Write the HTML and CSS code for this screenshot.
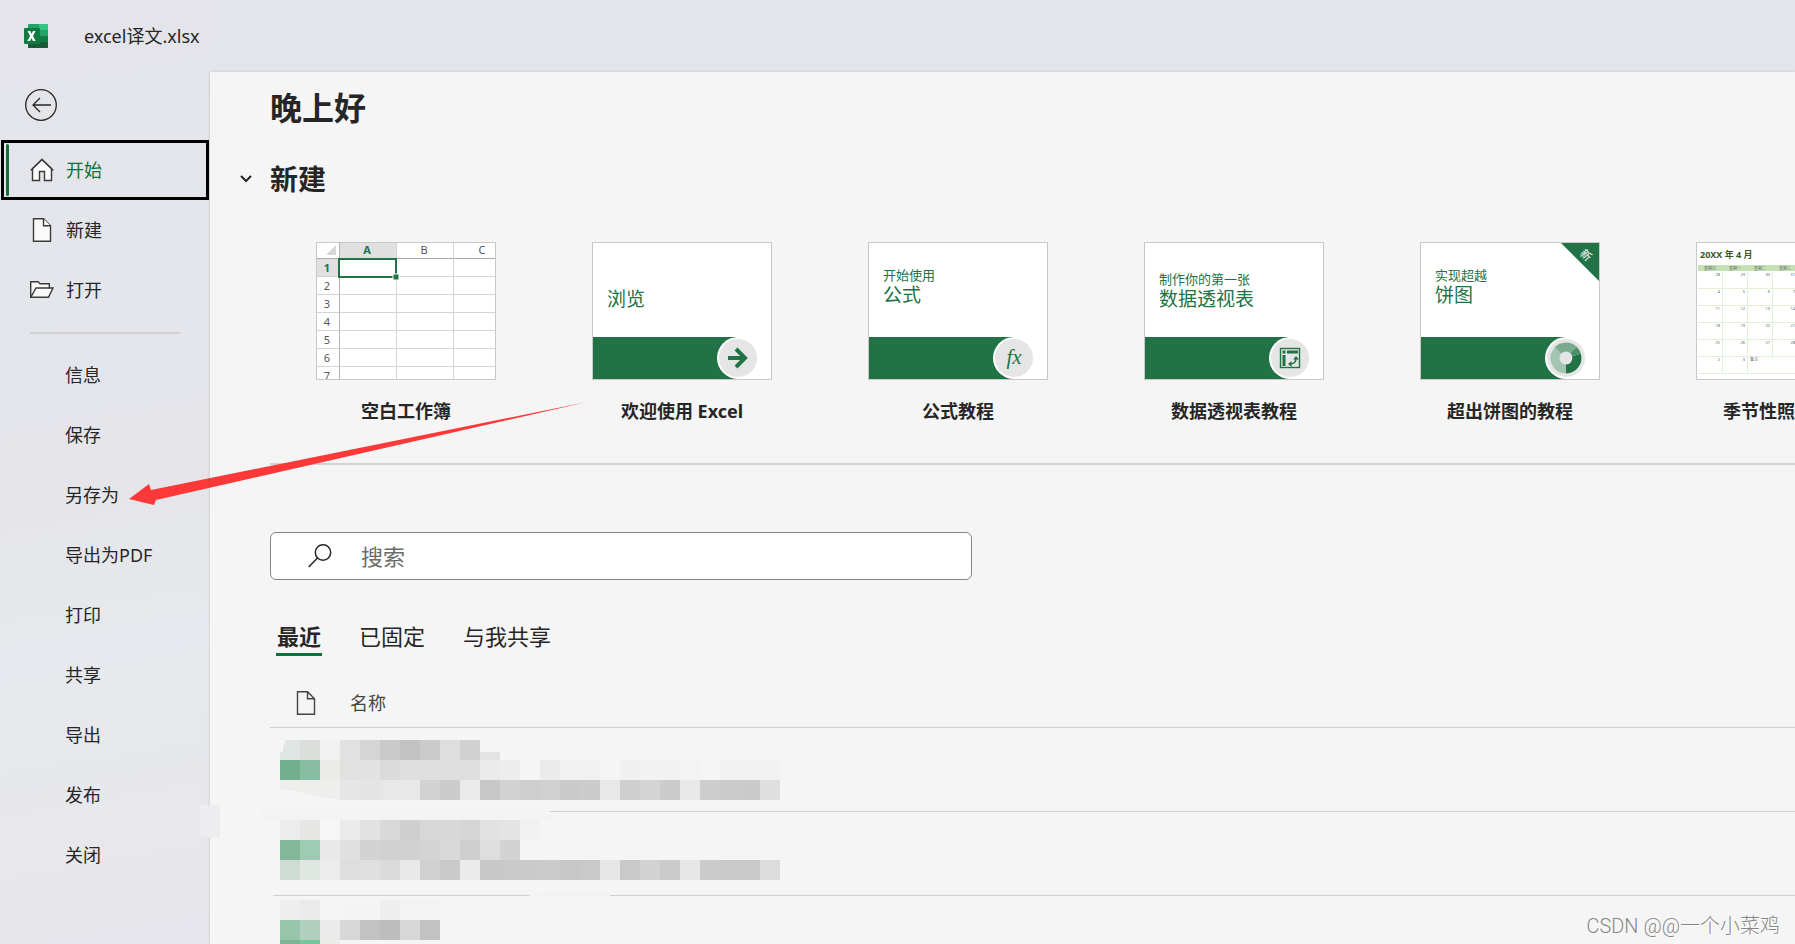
FILE: index.html
```html
<!DOCTYPE html>
<html lang="zh-CN">
  <head>
    <meta charset="UTF-8" />
    <meta name="viewport" content="width=device-width, initial-scale=1.0" />
    <title>excel译文.xlsx</title>
    <link rel="stylesheet" href="styles.css">
  </head>

  <body>
    <header class="titlebar">
      <svg class="logo" width="24" height="24" viewBox="0 0 24 24">
        <rect x="4" y="0" width="20" height="24" rx="1" fill="#21a366" />
        <rect x="15" y="0" width="9" height="6" fill="#33c481" />
        <rect x="4" y="12" width="11" height="6" fill="#185c37" />
        <rect x="15" y="12" width="9" height="6" fill="#107c41" />
        <rect x="4" y="18" width="20" height="6" rx="1" fill="#185c37" />
        <rect x="0" y="4" width="16" height="16" rx="1" fill="#107c41" />
        <path d="M3.500 7H6.300L7.600 9.900L9 7H11.500L9 12L11.600 17H8.900L7.500 14L6 17H3.300L6.100 12Z" fill="#fff" />
      </svg>
      <span class="filename">excel译文.xlsx</span>
    </header>

    <div class="container">
      <nav class="sidebar">
        <button class="back" aria-label="返回">
          <svg width="32" height="32" viewBox="0 0 32 32" fill="none" stroke="#262626" stroke-width="1.300">
            <circle cx="16" cy="16" r="15.300" />
            <path d="M26 16H8M15 9L8 16L15 23" />
          </svg>
        </button>
        <ul class="menu">
          <li>
            <a class="active" href="#home">
              <svg width="24" height="24" viewBox="0 0 24 24" fill="#fafafa" stroke="#3b3a39" stroke-width="1.400">
                <path d="M2.500 10.500V22.500H9.500V13.500H14.500V22.500H21.500V10.500L12 1.500Z" />
                <path d="M.7 12.500L12 1.500L23.300 12.500" fill="none" />
              </svg>
              开始
            </a>
          </li>
          <li>
            <a href="#new">
              <svg width="24" height="24" viewBox="0 0 24 24" fill="#fafafa" stroke="#3b3a39" stroke-width="1.400">
                <path d="M3.500 .7H13.500L20.500 7.700V23.300H3.500Z" />
                <path d="M13.500 .7V7.700H20.500" />
              </svg>
              新建
            </a>
          </li>
          <li>
            <a href="#open">
              <svg width="24" height="24" viewBox="0 0 24 24" fill="#fafafa" stroke="#3b3a39" stroke-width="1.400">
                <path d="M.7 19.300V3.700H8L10 5.700H19.300V10H23L18.500 19.300Z" />
                <path d="M.7 19.300L6 10H19.300" fill="none" />
              </svg>
              打开
            </a>
          </li>
        </ul>
        <hr class="split" />
        <ul class="menu">
          <li><a href="#info">信息</a></li>
          <li><a href="#save">保存</a></li>
          <li><a href="#saveas">另存为</a></li>
          <li><a href="#pdf">导出为PDF</a></li>
          <li><a href="#print">打印</a></li>
          <li><a href="#share">共享</a></li>
          <li><a href="#export">导出</a></li>
          <li><a href="#publish">发布</a></li>
          <li><a href="#close">关闭</a></li>
        </ul>
      </nav>

      <main class="main">
        <h1>晚上好</h1>
        <div class="section-title">
          <button class="toggle" aria-label="折叠">
            <svg width="12" height="8" viewBox="0 0 12 8" fill="none" stroke="#262626" stroke-width="2">
              <path d="M1 1L6 6L11 1" />
            </svg>
          </button>
          <h2>新建</h2>
        </div>

        <ul class="templates">
          <li>
            <div class="thumb">
              <svg id="sheet" width="178" height="136" viewBox="0 0 178 136"></svg>
            </div>
            <p>空白工作簿</p>
          </li>
          <li>
            <div class="thumb">
              <div class="words tall"><b>浏览</b></div>
              <div class="band"></div>
              <svg class="badge" width="42" height="42" viewBox="0 0 42 42">
                <circle cx="21" cy="21" r="21" fill="#fff" />
                <circle cx="21" cy="21" r="19" fill="#e5e5e5" />
                <path d="M11 21H29M19 12L28 21L19 30" fill="none" stroke="#217346" stroke-width="4" />
              </svg>
            </div>
            <p>欢迎使用 Excel</p>
          </li>
          <li>
            <div class="thumb">
              <div class="words"><small>开始使用</small><b>公式</b></div>
              <div class="band"></div>
              <svg class="badge" width="42" height="42" viewBox="0 0 42 42">
                <circle cx="21" cy="21" r="21" fill="#fff" />
                <circle cx="21" cy="21" r="19" fill="#e5e5e5" />
                <text class="fx" x="21" y="27" text-anchor="middle">fx</text>
              </svg>
            </div>
            <p>公式教程</p>
          </li>
          <li>
            <div class="thumb">
              <div class="words low"><small>制作你的第一张</small><b>数据透视表</b></div>
              <div class="band"></div>
              <svg class="badge" width="42" height="42" viewBox="0 0 42 42">
                <circle cx="21" cy="21" r="21" fill="#fff" />
                <circle cx="21" cy="21" r="19" fill="#e5e5e5" />
                <rect x="11.500" y="11.500" width="19" height="19" fill="none" stroke="#217346" stroke-width="1.400" />
                <path d="M13.500 13.500h3v3h-3zM18 13.500h11v3h-11zM13.500 18h3v11h-3z" fill="#217346" />
                <path d="M21 27C25 27 27 25 27 21" fill="none" stroke="#217346" stroke-width="1.500" />
                <path d="M24 22.500L27 19L30 22.500ZM22.500 24V30L19 27Z" fill="#217346" />
              </svg>
            </div>
            <p>数据透视表教程</p>
          </li>
          <li>
            <div class="thumb">
              <div class="words"><small>实现超越</small><b>饼图</b></div>
              <div class="band"></div>
              <svg class="badge" width="42" height="42" viewBox="0 0 42 42">
                <circle cx="21" cy="21" r="21" fill="#fff" />
                <circle cx="21" cy="21" r="19" fill="#e5e5e5" />
                <g fill="none" stroke-width="9">
                  <path d="M21 32A11 11 0 0 1 13 13.500" stroke="#a3c6b3" />
                  <path d="M13 13.500A11 11 0 0 1 28.500 13" stroke="#7aab90" />
                  <path d="M28.500 13A11 11 0 0 1 31.500 18" stroke="#4d8f6b" />
                  <path d="M31.500 18A11 11 0 0 1 21 32" stroke="#217346" />
                </g>
              </svg>
              <svg class="corner" width="38" height="38" viewBox="0 0 38 38">
                <path d="M0 0H38V38Z" fill="#217346" />
                <text x="25" y="16" text-anchor="middle" transform="rotate(45 25 12)">新</text>
              </svg>
            </div>
            <p>超出饼图的教程</p>
          </li>
          <li>
            <div class="thumb">
              <svg id="calendar" width="178" height="136" viewBox="0 0 178 136"></svg>
            </div>
            <p>季节性照片日历</p>
          </li>
        </ul>

        <hr class="line" />

        <label class="search">
          <svg width="24" height="24" viewBox="0 0 24 24" fill="none" stroke="#262626" stroke-width="1.500">
            <circle cx="15" cy="8.500" r="7.700" />
            <path d="M9.500 14L.7 23" />
          </svg>
          <input type="text" placeholder="搜索" aria-label="搜索" />
        </label>

        <div class="tabs">
          <button class="active">最近</button>
          <button>已固定</button>
          <button>与我共享</button>
        </div>

        <div class="recent">
          <table>
            <thead>
              <tr>
                <th class="type">
                  <svg width="24" height="24" viewBox="0 0 24 24" fill="none" stroke="#444" stroke-width="1.400">
                    <path d="M3.500 .7H13.500L20.500 7.700V23.300H3.500Z" />
                    <path d="M13.500 .7V7.700H20.500" />
                  </svg>
                </th>
                <th>名称</th>
              </tr>
            </thead>
            <tbody>
              <tr><td></td><td></td></tr>
              <tr><td></td><td></td></tr>
              <tr><td></td><td></td></tr>
            </tbody>
          </table>
          <svg id="mosaic" class="mosaic" width="520" height="220" viewBox="0 0 520 220" shape-rendering="crispEdges"></svg>
        </div>
      </main>
    </div>

    <svg class="smudge" width="20" height="34" viewBox="0 0 20 34">
      <path d="M0 0H20V34L0 31Z" fill="#ededf0" />
    </svg>
    <svg class="arrow" width="460" height="104" viewBox="0 0 460 104">
      <path d="M0 97L20 82L22 88L458 0L27 98L25 103Z" fill="#fc3938" />
    </svg>
    <div class="watermark">CSDN @@一个小菜鸡</div>

    <script src="script.js"></script>
  </body>
</html>
```

FILE: styles.css
```css
* {
  padding: 0;
  margin: 0;
  box-sizing: border-box;
}

html,
body {
  height: 100%;
  overflow: hidden;
}

body {
  position: relative;
  display: flex;
  flex-direction: column;
  font: 18px/24px "Noto Sans", "Noto Sans CJK SC", sans-serif;
  color: #262626;
  background: linear-gradient(170deg, #e4e4ea 0%, #e3e6eb 30%, #e5e5ea 50%, #e6e9ed 68%, #e8e6ec 100%) no-repeat 0 0 / 210px 100%, #e4e5ea;
}

ul {
  list-style: none;
}

a {
  color: inherit;
  text-decoration: none;
}

button {
  border: none;
  background: none;
  font: inherit;
  color: inherit;
  cursor: pointer;
}

svg {
  display: block;
}

/* 标题栏 */
.titlebar {
  flex: none;
  display: flex;
  align-items: center;
  gap: 36px;
  height: 72px;
  padding-left: 24px;
}

.container {
  flex: 1;
  display: flex;
  min-height: 0;
}

/* 左侧菜单 */
.sidebar {
  flex: none;
  width: 210px;
  padding-top: 17px;
}

.back {
  display: block;
  margin: 0 0 19px 25px;
}

.menu a {
  display: flex;
  align-items: center;
  gap: 12px;
  height: 60px;
  margin: 0 1px;
  padding-left: 64px;
}

.menu a:has(svg) {
  padding-left: 29px;
}

.menu a.active {
  position: relative;
  padding-left: 26px;
  border: 3px solid #000;
  color: #0f703b;
}

.menu a.active::before {
  content: "";
  position: absolute;
  left: 2px;
  top: 1px;
  bottom: 1px;
  width: 3px;
  border-radius: 2px;
  background-color: #0f703b;
}

.split {
  height: 2px;
  margin: 12px 30px 11px;
  border: none;
  background-color: #d0d0d2;
}

/* 右侧内容 */
.main {
  flex: 1;
  min-width: 0;
  padding: 14px 0 0 60px;
  overflow: hidden;
  background-color: #f5f5f5;
  box-shadow: 0 0 3px rgba(0, 0, 0, 0.15);
}

h1 {
  font-size: 32px;
  line-height: 44px;
}

.section-title {
  display: flex;
  align-items: center;
  gap: 18px;
  margin: 29px 0 43px -30px;
}

h2 {
  font-size: 28px;
  line-height: 40px;
}

.templates {
  display: flex;
  margin-left: -2px;
}

.templates li {
  flex: 0 0 276px;
}

.templates p {
  margin-top: 19px;
  font-weight: bold;
  text-align: center;
}

.thumb {
  position: relative;
  width: 180px;
  height: 138px;
  margin: 0 auto;
  border: 1px solid #c8c8c8;
  background-color: #fff;
  overflow: hidden;
}

.words {
  height: 94px;
  padding: 23px 0 0 14px;
  color: #217346;
}

.words.low {
  padding-top: 27px;
}

.words.tall {
  padding-top: 46px;
}

.words small,
.words b {
  display: block;
  font-size: 13px;
  line-height: 19px;
}

.words b {
  font-size: 19px;
  line-height: 20px;
  font-weight: normal;
}

.band {
  width: 144px;
  height: 42px;
  background-color: #217346;
}

.badge {
  position: absolute;
  left: 124px;
  bottom: 0;
}

.corner {
  position: absolute;
  top: 0;
  right: 0;
}

.corner text {
  font-size: 11px;
  fill: #fff;
}

.fx {
  font: italic 21px "Liberation Serif", serif;
  fill: #217346;
}

.line {
  height: 2px;
  margin: 40px 0 67px;
  border: none;
  background-color: #d2d2d2;
}

.search {
  display: flex;
  align-items: center;
  gap: 29px;
  max-width: 702px;
  height: 48px;
  padding-left: 37px;
  border: 1px solid #868686;
  border-radius: 6px;
  background-color: #fff;
}

.search input {
  flex: 1;
  border: none;
  outline: none;
  background: none;
  font: inherit;
  font-size: 22px;
}

.search input::placeholder {
  color: #6b6b6b;
}

.tabs {
  display: flex;
  gap: 36px;
  margin: 40px 6px 23px;
}

.tabs button {
  padding: 0 1px;
  border-bottom: 3px solid transparent;
  font-size: 22px;
  line-height: 33px;
}

.tabs .active {
  font-weight: bold;
  border-color: #0f703b;
}

.recent {
  position: relative;
}

.recent table {
  width: 100%;
  border-collapse: separate;
  border-spacing: 0;
}

.recent th {
  height: 49px;
  border-bottom: 1px solid #cfcfcf;
  font-weight: normal;
  text-align: left;
  color: #444;
}

.recent .type {
  width: 80px;
  padding-left: 24px;
}

.recent td {
  height: 84px;
  border-bottom: 1px solid #cfcfcf;
}

/* 打码 */
.mosaic {
  position: absolute;
  top: 49px;
  left: -10px;
}

.smudge {
  position: absolute;
  left: 200px;
  top: 805px;
}

.arrow {
  position: absolute;
  left: 129px;
  top: 402px;
}

.watermark {
  position: absolute;
  right: 15px;
  bottom: 5px;
  font: 20px/26px Roboto, "Noto Sans CJK SC", sans-serif;
  font-weight: 300;
  color: #858585;
  text-shadow: 1px 1px 0 #fff;
}

/* 缩略图文字 */
.head {
  font-size: 11px;
  fill: #555;
}

.head.on {
  font-weight: bold;
  fill: #217346;
}

.month {
  font-size: 9px;
  font-weight: bold;
  fill: #375623;
}

.day {
  font-size: 4px;
  fill: #666;
}
```

FILE: script.js
```js
// 空白工作簿
var s = '<rect x="23" width="57" height="16" fill="#e0e0e0"/><rect y="16" width="22" height="18" fill="#e0e0e0"/>';
s += '<path d="M19 2V12H9Z" fill="#d8d8d8"/>';
for (let i = 0; i < 7; i++) {
  s += `<rect y="${15 + i * 18}" width="178" height="1" fill="${i ? "#d4d4d4" : "#ababab"}"/>`;
  s += `<text class="head${i ? "" : " on"}" x="10" y="${29 + i * 18}" text-anchor="middle">${i + 1}</text>`;
}
s += '<path d="M22.500 0V136" stroke="#b5b5b5"/><path d="M79.500 0V136M136.500 0V136" stroke="#d4d4d4"/>';
s += '<text class="head on" x="50" y="11" text-anchor="middle">A</text>';
s += '<text class="head" x="107" y="11" text-anchor="middle">B</text>';
s += '<text class="head" x="165" y="11" text-anchor="middle">C</text>';
s += '<rect x="22" y="16" width="57" height="18" fill="#fff" stroke="#217346" stroke-width="2"/>';
s += '<rect x="76" y="31" width="6" height="6" fill="#217346" stroke="#fff"/>';
document.querySelector("#sheet").innerHTML = s;

// 日历
const weeks = ["星期日", "星期一", "星期二", "星期三", "星期四", "星期五", "星期六"];
const days = [
  [28, 29, 30, 31, 1, 2, 3],
  [4, 5, 6, 7, 8, 9, 10],
  [11, 12, 13, 14, 15, 16, 17],
  [18, 19, 20, 21, 22, 23, 24],
  [25, 26, 27, 28, 29, 30, 1],
  [2, 3],
];
var c = '<text class="month" x="3" y="15">20XX 年 4 月</text><rect x="1" y="22" width="175" height="6" fill="#c5e0b3"/>';
weeks.forEach(function (w, i) {
  c += `<text class="day" x="${13 + i * 25}" y="27" text-anchor="middle">${w}</text>`;
});
days.forEach(function (row, j) {
  c += `<rect x="1" y="${45 + j * 17}" width="175" height="1" fill="#e2efd9"/>`;
  row.forEach(function (d, i) {
    c += `<text class="day" x="${23 + i * 25}" y="${33 + j * 17}" text-anchor="end">${d}</text>`;
    c += `<rect x="${25 + i * 25}" y="${28 + j * 17}" width="1" height="17" fill="#e2efd9"/>`;
  });
});
c += '<text class="day" x="53" y="118">备注</text>';
document.querySelector("#calendar").innerHTML = c;

// 马赛克，每格 20px，- 为不绘制
const blocks = [
  [12, "dfe5e2 dcdedb f1f1f1 e1e1e1 d5d5d5 cacaca c2c2c2 cbcbcb dedede d1d1d1"],
  [32, "72af8e 87bda2 ebebe8 e1e1e1 e2e2e2 dbdbdb dedede dfdfdf dfdfdf dedede ebebeb ededed - ebebeb f1f1f1 f1f1f1 - f0f0f0 f2f2f2 f2f2f2 f3f3f3 - f2f2f2 f2f2f2 f2f2f2"],
  [52, "- - - e6e6e6 e4e4e4 e8e8e8 e8e8e8 d2d2d2 cccccc ebebeb c8c8c8 d3d3d3 cecece d0d0d0 cacaca cccccc e8e8e8 cfcfcf d4d4d4 cccccc e8e8e8 cdcdcd cbcbcb cacaca dfdfdf"],
  [92, "ececec e6e6e4 f6f6f6 ebebeb e2e2e2 d9d9d9 cfcfcf d7d7d7 d8d8d8 d5d5d5 e2e2e2 e4e4e4 f1f1f1"],
  [112, "82b89a 9dcbb3 e9e9e9 e0e0e0 d3d3d3 d1d1d1 d1d1d1 d4d4d4 d9d9d9 cfcfcf dedede d3d3d3"],
  [132, "cedcd3 e0e7e2 ececec dedede e0e0e0 dbdbdb e8e8e8 d0d0d0 c9c9c9 ebebeb c8c8c8 c9c9c9 cacaca cbcbcb c7c7c7 c9c9c9 e7e7e7 c9c9c9 d3d3d3 cbcbcb e7e7e7 cbcbcb c9c9c9 c9c9c9 dcdcdc"],
  [172, "eeeeee eaeaea - f4f4f4 f4f4f4 eeeeee f3f3f3 f3f3f3"],
  [192, "98c4ab b2d0c0 ebebeb d7d7d7 c2c2c2 bdbdbd d7d7d7 c2c2c2"],
  [212, "7db596 78c59d ebebe8"],
];
// 被涂抹掉的分隔线
var m = '<path d="M0 82H289L296 92H0Z" fill="#f3f3f3"/><path d="M10 166H13V169H10ZM269 166L310 163H345L352 170H269Z" fill="#f3f3f3"/>';
m += '<path d="M20 52H80V72Q40 65 20 60Z" fill="#eeeeed"/>';
m += '<rect x="220" y="24" width="20" height="8" fill="#e3e3e3"/>';
blocks.forEach(function (b) {
  b[1].split(" ").forEach(function (color, i) {
    if (color != "-") {
      m += `<rect x="${20 + i * 20}" y="${b[0]}" width="20" height="20" fill="#${color}"/>`;
    }
  });
});
m += '<path d="M20 12H26Q23 16 23 24H20Z" fill="#f5f5f5"/>';
document.querySelector("#mosaic").innerHTML = m;
```
